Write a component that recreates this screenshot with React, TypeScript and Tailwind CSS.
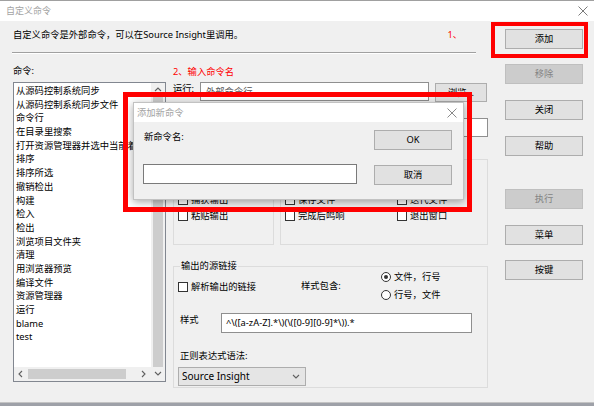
import React from "react";

const items = [
  "从源码控制系统同步",
  "从源码控制系统同步文件",
  "命令行",
  "在目录里搜索",
  "打开资源管理器并选中当前着色文件",
  "排序",
  "排序所选",
  "撤销检出",
  "构建",
  "检入",
  "检出",
  "浏览项目文件夹",
  "清理",
  "用浏览器预览",
  "编译文件",
  "资源管理器",
  "运行",
  "blame",
  "test",
];

function Btn({ children, disabled }: { children: React.ReactNode; disabled?: boolean }) {
  return (
    <div
      className={
        disabled
          ? "w-[78px] h-[20px] border border-[#bfbfbf] bg-[#cccccc] text-[#838383] flex items-center justify-center"
          : "w-[78px] h-[20px] border border-[#adadad] bg-[#e1e1e1] text-black flex items-center justify-center"
      }
    >
      {children}
    </div>
  );
}

function Check({ label }: { label: string }) {
  return (
    <div className="h-[10px] flex items-center gap-[3px] whitespace-nowrap">
      <span className="w-[10px] h-[10px] border border-[#333333] bg-white shrink-0" />
      <span>{label}</span>
    </div>
  );
}

function Radio({ label, on }: { label: string; on?: boolean }) {
  return (
    <div className="h-[10px] flex items-center gap-[3px] whitespace-nowrap">
      <span className="w-[10px] h-[10px] rounded-full border border-[#333333] bg-white flex items-center justify-center shrink-0">
        {on && <span className="w-[4px] h-[4px] rounded-full bg-[#333333]" />}
      </span>
      <span>{label}</span>
    </div>
  );
}

function Chev({ dir }: { dir: "up" | "down" | "left" | "right" }) {
  const d =
    dir === "up"
      ? "M1 5 L4 2 L7 5"
      : dir === "down"
      ? "M1 2 L4 5 L7 2"
      : dir === "left"
      ? "M5 1 L2 4 L5 7"
      : "M2 1 L5 4 L2 7";
  return (
    <svg width="8" height="8" viewBox="0 0 8 8">
      <path d={d} fill="none" stroke="#606060" strokeWidth="1.1" />
    </svg>
  );
}

function CloseX({ color }: { color: string }) {
  return (
    <svg width="10" height="10" viewBox="0 0 10 10">
      <path d="M0.5 0.5 L9.5 9.5 M9.5 0.5 L0.5 9.5" stroke={color} strokeWidth="1" />
    </svg>
  );
}

export default function App() {
  return (
    <div className="w-[594px] h-[406px] bg-[#f0f0f0] relative overflow-hidden flex flex-col text-[9.3px] text-black font-['Noto_Sans','Noto_Sans_CJK_SC',sans-serif]">
      {/* title bar */}
      <div className="h-[21px] shrink-0 bg-white border-t border-[#a0a0a0] flex items-center pl-[6px] pr-[6px]">
        <span className="text-[#a3a3a3] text-[9px]">自定义命令</span>
        <span className="ml-auto flex">
          <CloseX color="#7a7a7a" />
        </span>
      </div>

      {/* body */}
      <div className="flex-1 flex min-h-0">
        <div className="w-[505px] pl-[13px] flex flex-col">
          <div className="mt-[7px] h-[14px] flex items-center whitespace-nowrap">
            <span>自定义命令是外部命令，可以在Source Insight里调用。</span>
            <span className="ml-auto mr-[43px] text-[#ff0000]">1、</span>
          </div>
          <div className="mt-[10px] w-[464px] -ml-px border-t border-[#a0a0a0] border-b border-b-white" />

          <div className="flex">
            {/* list column */}
            <div className="w-[153px] flex flex-col">
              <div className="mt-[10px] h-[14px] flex items-center">命令:</div>
              <div className="mt-[4px] h-[300px] w-[153px] border border-[#828790] bg-white flex">
                <div className="flex-1 flex flex-col min-w-0">
                  <div className="flex-1 overflow-hidden pt-[1px] px-[2px]">
                    {items.map((t) => (
                      <div key={t} className="h-[13.7px] leading-[13.7px] whitespace-nowrap">
                        {t}
                      </div>
                    ))}
                  </div>
                  <div className="h-[14px] bg-[#f0f0f0] flex items-center">
                    <div className="w-[14px] h-[14px] flex items-center justify-center">
                      <Chev dir="left" />
                    </div>
                    <div className="w-[98px] h-[10px] bg-[#cdcdcd]" />
                    <div className="flex-1" />
                    <div className="w-[14px] h-[14px] flex items-center justify-center">
                      <Chev dir="right" />
                    </div>
                  </div>
                </div>
                <div className="w-[14px] bg-[#f0f0f0] flex flex-col">
                  <div className="h-[14px] flex items-center justify-center">
                    <Chev dir="up" />
                  </div>
                  <div className="flex-1 mx-[2px] bg-[#cdcdcd]" />
                  <div className="h-[14px] flex items-center justify-center">
                    <Chev dir="down" />
                  </div>
                </div>
              </div>
            </div>

            {/* config column */}
            <div className="ml-[7px] w-[315px] flex flex-col">
              <div className="mt-[11px] h-[14px] flex items-center text-[#ff0000]">2、输入命令名</div>
              <div className="mt-[3px] flex items-start">
                <div className="w-[27px] h-[13px] flex items-center">运行:</div>
                <div className="w-[229px] h-[19px] border border-[#8f8f8f] bg-white flex items-center pl-[5px] text-[#555555] whitespace-nowrap">
                  外部命令行
                </div>
                <div className="ml-[6px] mt-[1px] w-[52px] h-[19px] border border-[#adadad] bg-[#e1e1e1] flex items-center justify-center">
                  浏览...
                </div>
              </div>
              <div className="mt-[16px] ml-[27px] w-[288px] h-[19px] border border-[#8f8f8f] bg-white" />

              <div className="mt-[22px] h-[86px] flex gap-[6px]">
                <div className="w-[101px] border border-[#dcdcdc] pt-[35px] pl-[4px] flex flex-col gap-[6px]">
                  <Check label="捕获输出" />
                  <Check label="粘贴输出" />
                </div>
                <div className="w-[208px] border border-[#dcdcdc] pt-[35px] pl-[4px] flex flex-col gap-[6px]">
                  <div className="flex">
                    <div className="w-[112px]">
                      <Check label="保存文件" />
                    </div>
                    <Check label="迭代文件" />
                  </div>
                  <div className="flex">
                    <div className="w-[112px]">
                      <Check label="完成后鸣响" />
                    </div>
                    <Check label="退出窗口" />
                  </div>
                </div>
              </div>

              <fieldset className="mt-[14px] h-[129px] border border-[#dcdcdc] px-[4px]">
                <legend className="ml-[2px] px-[1px] leading-[14px]">输出的源链接</legend>
                <div className="flex items-start h-[28px]">
                  <div className="mt-[9px] w-[123px]">
                    <Check label="解析输出的链接" />
                  </div>
                  <div className="mt-[7px] h-[12px] flex items-center w-[80px]">样式包含:</div>
                  <div className="-mt-px flex flex-col gap-[8px]">
                    <Radio label="文件，行号" on />
                    <Radio label="行号，文件" />
                  </div>
                </div>
                <div className="mt-[12px] flex items-start">
                  <div className="ml-[2px] w-[41px] h-[14px] flex items-center">样式</div>
                  <div className="w-[251px] h-[20px] border border-[#8f8f8f] bg-white flex items-center pl-[4px] whitespace-nowrap">
                    {"^\\([a-zA-Z].*\\)(\\([0-9][0-9]*\\)).*"}
                  </div>
                </div>
                <div className="mt-[16px] ml-[2px] h-[14px] flex items-center">正则表达式语法:</div>
                <div className="mt-[4px] w-[128px] h-[19px] border border-[#adadad] bg-[#e5e5e5] flex items-center pl-[3px] pr-[5px]">
                  <span className="text-[10px]">Source Insight</span>
                  <span className="ml-auto flex">
                    <Chev dir="down" />
                  </span>
                </div>
              </fieldset>
            </div>
          </div>
        </div>

        {/* right buttons */}
        <div className="w-[78px] flex flex-col">
          <div className="mt-[8px]">
            <Btn>添加</Btn>
          </div>
          <div className="mt-[15px]">
            <Btn disabled>移除</Btn>
          </div>
          <div className="mt-[16px]">
            <Btn>关闭</Btn>
          </div>
          <div className="mt-[16px]">
            <Btn>帮助</Btn>
          </div>
          <div className="mt-[33px]">
            <Btn disabled>执行</Btn>
          </div>
          <div className="mt-[16px]">
            <Btn>菜单</Btn>
          </div>
          <div className="mt-[15px]">
            <Btn>按键</Btn>
          </div>
        </div>
      </div>

      <div className="h-[4px] shrink-0 border-t border-[#c4c4c4] bg-[#9ea1a8]" />

      {/* red highlight around 添加 */}
      <div className="absolute left-[491px] top-[22px] w-[97px] h-[36px] border-[4px] border-[#ff0000]" />

      {/* add new command dialog */}
      <div className="absolute left-[133px] top-[102px] w-[331px] h-[98px] bg-[#f0f0f0] border border-[#c2c2c2] shadow-[0_2px_8px_rgba(0,0,0,0.35)] flex flex-col">
        <div className="h-[19px] bg-white flex items-center pl-[3px] pr-[6px]">
          <span className="text-[#a3a3a3]">添加新命令</span>
          <span className="ml-auto flex">
            <CloseX color="#8a8a8a" />
          </span>
        </div>
        <div className="flex">
          <div className="pl-[9px] flex flex-col">
            <div className="mt-[8px] h-[14px] flex items-center pl-px">新命令名:</div>
            <div className="mt-[20px] w-[214px] h-[20px] border border-[#7a7a7a] bg-white" />
          </div>
          <div className="ml-auto mr-[11px] flex flex-col">
            <div className="mt-[8px]">
              <Btn>OK</Btn>
            </div>
            <div className="mt-[15px]">
              <Btn>取消</Btn>
            </div>
          </div>
        </div>
      </div>

      {/* red highlight around dialog */}
      <div className="absolute left-[123px] top-[92px] w-[349px] h-[120px] border-[5px] border-[#ff0000]" />
    </div>
  );
}
